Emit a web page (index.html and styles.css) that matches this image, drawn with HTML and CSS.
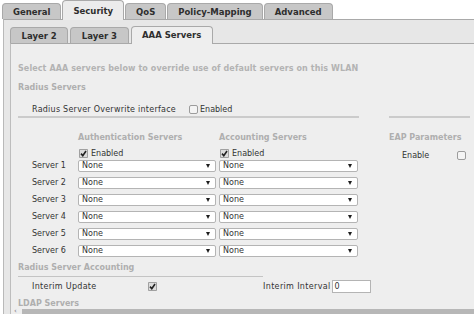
FILE: index.html
```html
<!DOCTYPE html>
<html>
<head>
<meta charset="utf-8">
<link rel="stylesheet" href="styles.css">
</head>
<body>
<div class="tabbar outer-tabs">
  <div class="tab">General</div>
  <div class="tab active">Security</div>
  <div class="tab">QoS</div>
  <div class="tab">Policy-Mapping</div>
  <div class="tab">Advanced</div>
</div>
<div class="outer-panel">
  <div class="tabbar inner-tabs">
    <div class="tab">Layer 2</div>
    <div class="tab">Layer 3</div>
    <div class="tab active">AAA Servers</div>
  </div>
  <div class="inner-panel">
    <div class="intro">Select AAA servers below to override use of default servers on this WLAN</div>
    <div class="heading rs-heading">Radius Servers</div>
    <div class="overwrite">
      <span class="ow-label">Radius Server Overwrite interface</span>
      <span class="cb"></span><span class="cb-text">Enabled</span>
    </div>
    <div class="rules"><div class="rule rule-main"></div><div class="rule rule-eap"></div></div>
    <div class="servers">
      <div></div>
      <div class="heading">Authentication Servers</div>
      <div class="heading">Accounting Servers</div>
      <div class="heading eap-head">EAP Parameters</div>

      <div></div>
      <div class="enabled"><span class="cb checked"><svg viewBox="0 0 9 9" width="9" height="9"><path d="M2 4.6 L3.8 6.6 L7 2" fill="none" stroke="#222" stroke-width="1.6"/></svg></span><span class="cb-text">Enabled</span></div>
      <div class="enabled"><span class="cb checked"><svg viewBox="0 0 9 9" width="9" height="9"><path d="M2 4.6 L3.8 6.6 L7 2" fill="none" stroke="#222" stroke-width="1.6"/></svg></span><span class="cb-text">Enabled</span></div>
      <div class="eap-enable"><span>Enable</span><span class="cb"></span></div>

      <div class="srv">Server 1</div><div class="select sel-auth"><span>None</span></div><div class="select sel-acct"><span>None</span></div><div></div>
      <div class="srv">Server 2</div><div class="select sel-auth"><span>None</span></div><div class="select sel-acct"><span>None</span></div><div></div>
      <div class="srv">Server 3</div><div class="select sel-auth"><span>None</span></div><div class="select sel-acct"><span>None</span></div><div></div>
      <div class="srv">Server 4</div><div class="select sel-auth"><span>None</span></div><div class="select sel-acct"><span>None</span></div><div></div>
      <div class="srv">Server 5</div><div class="select sel-auth"><span>None</span></div><div class="select sel-acct"><span>None</span></div><div></div>
      <div class="srv">Server 6</div><div class="select sel-auth"><span>None</span></div><div class="select sel-acct"><span>None</span></div><div></div>
    </div>
    <div class="heading rsa-heading">Radius Server Accounting</div>
    <div class="rule rule-acct"></div>
    <div class="interim">
      <span class="iu-label">Interim Update</span>
      <span class="cb checked"><svg viewBox="0 0 9 9" width="9" height="9"><path d="M2 4.6 L3.8 6.6 L7 2" fill="none" stroke="#222" stroke-width="1.6"/></svg></span>
      <span class="ii-label">Interim Interval</span>
      <span class="input">0</span>
    </div>
    <div class="heading ldap-heading">LDAP Servers</div>
    <div class="hscroll"><span class="arrow">‹</span><span class="bar"></span></div>
  </div>
</div>
</body>
</html>
```

FILE: styles.css
```css
body {
  margin: 0;
  width: 474px;
  height: 314px;
  overflow: hidden;
  background: #fff;
  font-family: "DejaVu Sans", Verdana, sans-serif;
  font-size: 8px;
  color: #333;
}

.tabbar {
  display: flex;
  align-items: flex-end;
  gap: 1px;
}

.tab {
  position: relative;
  padding: 0 10px;
  background: #c7c7c7;
  border: 1px solid #a9a9a9;
  border-bottom: none;
  border-radius: 4px 4px 0 0;
  font-weight: bold;
  font-size: 8.5px;
  color: #2e2e2e;
}

.outer-tabs {
  height: 19px;
  padding-left: 2px;
}

.outer-tabs .tab {
  height: 15px;
  line-height: 16px;
}

.outer-tabs .tab.active {
  height: 19px;
  line-height: 20px;
  margin-bottom: -1px;
  background: #ececec;
}

.outer-panel {
  margin-left: 3px;
  border-top: 1px solid #a9a9a9;
  border-left: 1px solid #b9b9b9;
  background: #e7e7e7;
  padding: 6px 0 0 6px;
}

.inner-tabs {
  height: 17px;
  gap: 2px;
}

.inner-tabs .tab {
  height: 15px;
  line-height: 16px;
  padding: 0 10.5px;
}

.inner-tabs .tab.active {
  height: 17px;
  line-height: 17px;
  margin-bottom: -1px;
  background: #eeeeee;
}

.inner-panel {
  border-top: 1px solid #a9a9a9;
  border-left: 1px solid #bdbdbd;
  background: #eeeeee;
  padding-left: 7px;
}

.intro {
  margin-top: 19px;
  line-height: 12px;
  font-weight: bold;
  color: #b3b3b3;
  letter-spacing: 0.1px;
}

.heading {
  line-height: 12px;
  font-weight: bold;
  color: #afafaf;
  white-space: nowrap;
}

.rs-heading {
  margin-top: 7px;
}

.overwrite {
  margin-top: 9px;
  height: 12px;
  display: flex;
  align-items: center;
  padding-left: 14px;
}

.ow-label {
  width: 157px;
  letter-spacing: 0.25px;
}

.cb {
  display: inline-flex;
  width: 7px;
  height: 7px;
  border: 1px solid #9c9c9c;
  border-radius: 2px;
  background: #f4f4f4;
  flex: none;
}

.cb.checked {
  width: 9px;
  height: 9px;
  border: none;
  background: none;
}

.cb.checked svg {
  display: block;
  width: 9px;
  height: 9px;
  background: #dcdcdc;
  border-radius: 1px;
  box-shadow: inset 0 0 0 1px #a0a0a0;
}

.cb-text {
  margin-left: 2px;
}

.rules {
  display: flex;
  margin-top: 1px;
}

.rule {
  height: 2px;
  background: #cbcbcb;
}

.rule-main {
  width: 341px;
}

.rule-eap {
  width: 81px;
  margin-left: 30px;
}

.servers {
  margin-top: 14px;
  display: grid;
  grid-template-columns: 60px 141px 170px 82px;
  grid-template-rows: 15px 13px repeat(6, 17px);
}

.enabled {
  display: flex;
  align-items: center;
  height: 12px;
  padding-left: 1px;
}

.enabled .cb-text {
  margin-left: 3px;
}

.eap-enable {
  display: flex;
  align-items: center;
  height: 12px;
  margin-top: 2px;
  padding-left: 13px;
}

.eap-enable span:first-child {
  width: 55px;
}

.srv {
  padding-left: 14px;
  line-height: 12px;
}

.select {
  box-sizing: border-box;
  height: 12px;
  background: #fff;
  border: 1px solid #b4b4b4;
  border-radius: 2px;
  display: flex;
  align-items: center;
  justify-content: space-between;
  padding: 0 5px 0 3px;
  line-height: 10px;
}

.select::after {
  content: "";
  border-left: 2.5px solid transparent;
  border-right: 2.5px solid transparent;
  border-top: 4px solid #1e1e1e;
}

.sel-auth {
  width: 138px;
}

.sel-acct {
  width: 139px;
}

.rule-acct {
  margin-top: 2px;
  width: 245px;
  height: 1px;
  background: #c4c4c4;
}

.interim {
  margin-top: 2px;
  height: 15px;
  display: flex;
  align-items: center;
  padding-left: 14px;
}

.iu-label {
  width: 116px;
  letter-spacing: 0.3px;
}

.ii-label {
  margin-left: 106px;
  margin-right: 1px;
  letter-spacing: 0.35px;
}

.input {
  box-sizing: border-box;
  width: 39px;
  height: 13px;
  background: #fff;
  border: 1px solid #b4b4b4;
  padding-left: 2px;
  line-height: 11px;
}

.ldap-heading {
  margin-top: 5px;
  line-height: 10px;
}

.hscroll {
  display: flex;
  align-items: center;
  height: 5px;
  margin-left: -4px;
}

.arrow {
  font-size: 7px;
  line-height: 5px;
  color: #777;
  width: 8px;
}

.bar {
  flex: 1;
  height: 5px;
  background: #b7b7b7;
}
```
